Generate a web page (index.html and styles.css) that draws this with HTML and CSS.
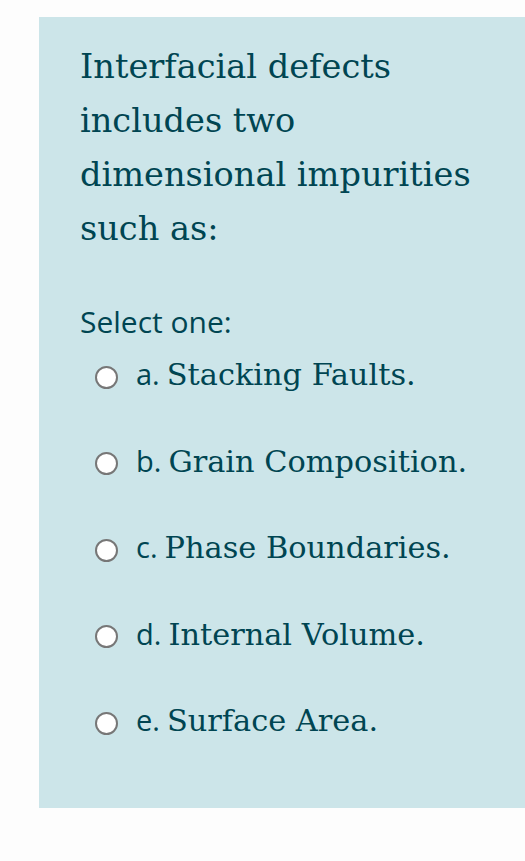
FILE: index.html
```html
<!DOCTYPE html>
<html>
<head>
<meta charset="utf-8">
<link rel="stylesheet" href="styles.css">
</head>
<body>
<div class="card">
  <div class="question">Interfacial defects includes two dimensional impurities such as:</div>
  <div class="prompt">Select one:</div>
  <div class="options">
    <label class="opt"><span class="radio"></span><span class="label"><span class="letter">a.</span><span class="text">Stacking Faults.</span></span></label>
    <label class="opt"><span class="radio"></span><span class="label"><span class="letter">b.</span><span class="text">Grain Composition.</span></span></label>
    <label class="opt"><span class="radio"></span><span class="label"><span class="letter">c.</span><span class="text">Phase Boundaries.</span></span></label>
    <label class="opt"><span class="radio"></span><span class="label"><span class="letter">d.</span><span class="text">Internal Volume.</span></span></label>
    <label class="opt"><span class="radio"></span><span class="label"><span class="letter">e.</span><span class="text">Surface Area.</span></span></label>
  </div>
</div>
</body>
</html>
```
FILE: styles.css
```css
html, body { margin: 0; padding: 0; background: #fdfdfd; }
body { padding: 17px 0 0 39px; }
.card {
  background: #cce5e9;
  height: 791px;
  box-sizing: border-box;
  padding: 23px 20px 0 41px;
  color: #004552;
}
.question {
  font-family: "DejaVu Serif", serif;
  font-size: 33.6px;
  line-height: 54px;
  width: 415px;
}
.prompt {
  font-family: "Open Sans", sans-serif;
  font-size: 30px;
  margin-top: 46px;
  line-height: 40px;
}
.options { display: flex; flex-direction: column; gap: 46.5px; padding-left: 15px; margin-top: 15px; }
.opt { display: flex; align-items: center; height: 40px; }
.radio {
  width: 19px; height: 19px; border: 2px solid #777; border-radius: 50%;
  background: #fff; margin-right: 18px; flex: none;
}
.label { line-height: 40px; white-space: nowrap; }
.letter { font-family: "Open Sans", sans-serif; font-size: 29px; margin-right: 7px; }
.text { font-family: "DejaVu Serif", serif; font-size: 30.4px; }
```
